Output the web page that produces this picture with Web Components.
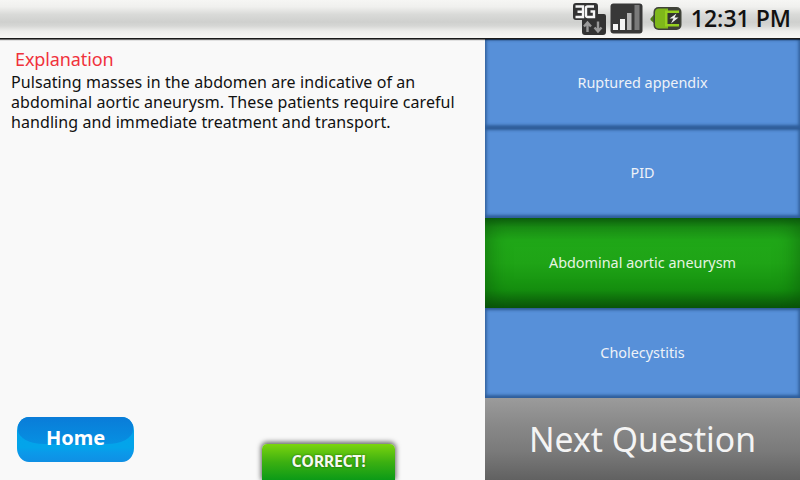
<!DOCTYPE html>
<html>
<head>
<meta charset="utf-8">
<style>
html,body{margin:0;padding:0;width:800px;height:480px;overflow:hidden;background:#f9f9f9;font-family:"Noto Sans","Open Sans",sans-serif}
quiz-screen{width:800px;height:480px}
</style>
</head>
<body>
<quiz-screen>
  <status-bar slot="top" time="12:31 PM"></status-bar>
  <explanation-panel slot="left" title="Explanation">Pulsating masses in the abdomen are indicative of an abdominal aortic aneurysm. These patients require careful handling and immediate treatment and transport.</explanation-panel>
  <answer-button slot="right">Ruptured appendix</answer-button>
  <answer-button slot="right">PID</answer-button>
  <answer-button slot="right" correct>Abdominal aortic aneurysm</answer-button>
  <answer-button slot="right">Cholecystitis</answer-button>
  <next-button slot="right">Next Question</next-button>
</quiz-screen>

<script>
class QuizScreen extends HTMLElement {
  constructor(){
    super();
    this.attachShadow({mode:'open'}).innerHTML =
      '<style>'+
      ':host{display:grid;grid-template-columns:485px 315px;grid-template-rows:38px 442px}'+
      '.top{grid-column:1 / 3;display:block;position:relative;z-index:2}'+
      '.left{display:block;min-height:0}'+
      '.right{display:flex;flex-direction:column}'+
      '</style>'+
      '<div class="top"><slot name="top"></slot></div>'+
      '<div class="left"><slot name="left"></slot></div>'+
      '<div class="right"><slot name="right"></slot></div>';
  }
}

class StatusBar extends HTMLElement {
  constructor(){
    super();
    const time = this.getAttribute('time');
    this.attachShadow({mode:'open'}).innerHTML =
      '<style>'+
      ':host{display:flex;align-items:center;justify-content:flex-end;height:38px;box-sizing:border-box;padding:0 9px 1px 0;'+
      'background:linear-gradient(#f6f6f4 0,#f0f0ee 18%,#d9dad8 38%,#cfd0ce 58%,#d6d7d5 68%,#eeeeec 82%,#f8f8f6 100%);'+
      'box-shadow:0 1px 0 #1a1a1a,0 2px 1px rgba(0,0,0,.55)}'+
      'svg{display:block;flex:none}'+
      '.net{margin-right:4px}.sig{margin-right:7px}.bat{margin-right:9px}'+
      '.time{font:600 23px/1 "Open Sans","Noto Sans",sans-serif;color:#111}'+
      '</style>'+
      '<svg class="net" width="33" height="32" viewBox="0 0 33 32">'+
        '<path d="M0 3a3 3 0 0 1 3-3h19a3 3 0 0 1 3 3v8h6a2 2 0 0 1 2 2V29a3 3 0 0 1-3 3H12a3 3 0 0 1-3-3V17H3a3 3 0 0 1-3-3z" fill="#333"/>'+
        '<path d="M2.500 3.500h7.500v10.500H2.500M4.500 8.700h5.500" fill="none" stroke="#f6f6f6" stroke-width="2.400"/>'+
        '<path d="M21 3.500H14.500a1.500 1.500 0 0 0-1.500 1.500v7.500a1.500 1.500 0 0 0 1.500 1.500H21v-5.500H17.500" fill="none" stroke="#f6f6f6" stroke-width="2.400"/>'+
        '<path d="M14.500 29v-9M11 23.500l3.500-4 3.500 4M25 18.500v9.500M21.500 24.500l3.500 4 3.500-4" fill="none" stroke="#9a9a9a" stroke-width="2.400"/>'+
      '</svg>'+
      '<svg class="sig" width="33" height="31" viewBox="0 0 33 31">'+
        '<rect x=".5" y=".5" width="32" height="30" rx="3" fill="#383838"/>'+
        '<rect x="3" y="21" width="5" height="6" fill="#f4f4f4"/>'+
        '<rect x="10" y="16" width="5" height="11" fill="#f4f4f4"/>'+
        '<rect x="17" y="10" width="4.500" height="17" fill="#b4b4b4"/>'+
        '<rect x="24.500" y="2" width="5" height="25" fill="#7a7a7a"/>'+
      '</svg>'+
      '<svg class="bat" width="32" height="23" viewBox="0 0 32 23">'+
        '<path d="M.5 11.500 4.500 7V3h3v17h-3v-3.500L.5 13z" fill="#4f7d14"/>'+
        '<rect x="3.500" y="0" width="28" height="23" rx="5" fill="#3f4238"/>'+
        '<path d="M9 1.500h9v20H9a4 4 0 0 1-4-4v-12a4 4 0 0 1 4-4z" fill="#7fb81a"/>'+
        '<path d="M15 3.500h14v16H15z" fill="#96d01f"/>'+
        '<rect x="17.500" y="6" width="12.500" height="11" fill="#33352e"/>'+
        '<path d="M26.500 6.500 19.500 11.500h4l-2.500 5 7.500-6h-4l2-4z" fill="#f0f0f0"/>'+
      '</svg>'+
      '<span class="time">'+time+'</span>';
  }
}

class ExplanationPanel extends HTMLElement {
  constructor(){
    super();
    const title = this.getAttribute('title');
    this.attachShadow({mode:'open'}).innerHTML =
      '<style>'+
      ':host{display:flex;flex-direction:column;height:100%;position:relative;background:#f9f9f9;color:#111;box-sizing:border-box;padding:10px 12px 18px 11px}'+
      'h2{margin:0 0 2px 4px;font:400 18px/22px "Noto Sans","Open Sans",sans-serif;letter-spacing:-.1px;color:#f0323c}'+
      'p{margin:0;font:400 16px/20px "Noto Sans","Open Sans",sans-serif;letter-spacing:.08px;color:#111}'+
      '.home{margin-top:auto;margin-left:6px;width:117px;height:45px;box-sizing:border-box;padding-bottom:3px;border-radius:12px / 14px;display:flex;align-items:center;justify-content:center;position:relative;overflow:hidden;'+
      'font:700 20px/1 "Noto Sans","Open Sans",sans-serif;color:#fff;'+
      'background:linear-gradient(#02a3ea 0,#03a4ea 68%,#0a9aea 78%,#0f8fe4 100%)}'+
      '.home::before{content:"";position:absolute;left:1px;right:1px;top:0;height:27px;border-radius:0 0 26px 26px / 0 0 14px 14px;background:linear-gradient(#0a7cd8,#0690e2)}'+
      '.home span{position:relative}'+
      '.toast{position:absolute;left:262px;top:406px;width:133px;height:36px;box-sizing:border-box;padding-top:1px;border-radius:5px 5px 0 0;text-align:center;'+
      'font:700 16px/32px "Open Sans","Noto Sans",sans-serif;letter-spacing:-.4px;color:#f6faf0;text-shadow:0 0 2px rgba(20,60,0,.8);'+
      'background:linear-gradient(#7bd40e 0,#3cb011 50%,#0b9a17 100%);box-shadow:0 -1px 5px 1px rgba(0,0,0,.6)}'+
      '</style>'+
      '<h2>'+title+'</h2><p><slot></slot></p>'+
      '<div class="home"><span>Home</span></div>'+
      '<div class="toast">CORRECT!</div>';
  }
}

class AnswerButton extends HTMLElement {
  constructor(){
    super();
    this.attachShadow({mode:'open'}).innerHTML =
      '<style>'+
      ':host{display:flex;flex:none;height:90px;align-items:center;justify-content:center;box-sizing:border-box;'+
      'font:400 14.400px/1 "Noto Sans","Open Sans",sans-serif;color:#eef2f8;background:#5790d9;'+
      'box-shadow:inset 0 3px 3px -1px #2d5a94,inset 0 -4px 3px -1px #2f5e9b,inset 3px 0 3px -1px #3d6ca9,inset -3px 0 3px -1px #3d6ca9}'+
      ':host([correct]){color:#e6f4e2;'+
      'background:linear-gradient(#0f6a0f 0,#1c9416 10%,#20a818 25%,#1fa416 50%,#15900f 80%,#0b5c0b 100%);'+
      'box-shadow:inset 0 0 22px 2px rgba(5,65,5,.5)}'+
      '</style><slot></slot>';
  }
}

class NextButton extends HTMLElement {
  constructor(){
    super();
    this.attachShadow({mode:'open'}).innerHTML =
      '<style>'+
      ':host{display:flex;flex:none;height:82px;align-items:center;justify-content:center;box-sizing:border-box;padding-top:2px;'+
      'font:400 33.700px/1 "Noto Sans","Open Sans",sans-serif;color:#f4f4f4;'+
      'background:linear-gradient(#9b9b9b 0,#8a8a8a 30%,#7a7a7a 65%,#616161 100%)}'+
      '</style><slot></slot>';
  }
}

customElements.define('quiz-screen', QuizScreen);
customElements.define('status-bar', StatusBar);
customElements.define('explanation-panel', ExplanationPanel);
customElements.define('answer-button', AnswerButton);
customElements.define('next-button', NextButton);
</script>
</body>
</html>
